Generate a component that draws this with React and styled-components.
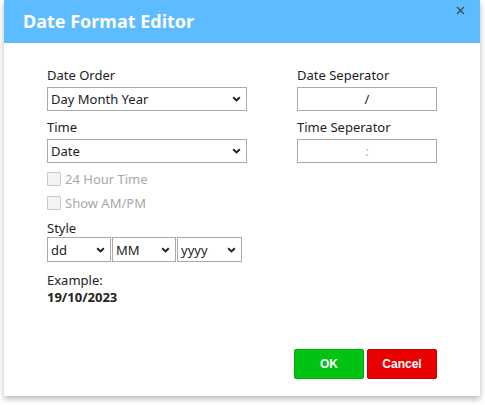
import React from "react";
import styled, { createGlobalStyle } from "styled-components";

const GlobalStyle = createGlobalStyle`
  html, body {
    margin: 0;
    padding: 0;
    background: #ffffff;
  }
  body {
    font-family: "Segoe UI", "Noto Sans", "Liberation Sans", sans-serif;
  }
`;

const Page = styled.div`
  width: 485px;
  height: 405px;
  padding-left: 4px;
  box-sizing: border-box;
`;

const Dialog = styled.div`
  width: 476px;
  height: 396px;
  background: #fff;
  display: flex;
  flex-direction: column;
  box-shadow: 0 3px 6px rgba(0, 0, 0, 0.28);
`;

const Header = styled.div`
  height: 43px;
  background: #5dbcff;
  display: flex;
  align-items: center;
  justify-content: space-between;
  padding: 0 14px 0 19px;
  position: relative;
`;

const Title = styled.h2`
  margin: 0;
  margin-top: -1px;
  font-size: 18px;
  font-weight: 700;
  color: #fff;
`;

const Close = styled.button`
  position: absolute;
  top: 6px;
  right: 15px;
  width: 9px;
  height: 9px;
  padding: 0;
  border: 0;
  background: none;
  display: flex;
`;

const Body = styled.div`
  flex: 1;
  display: flex;
  gap: 50px;
  padding: 24px 0 0 43px;
`;

const Column = styled.div`
  width: ${({ $w }) => $w}px;
  display: flex;
  flex-direction: column;
`;

const Label = styled.div`
  font-size: 13px;
  line-height: 17px;
  color: ${({ $muted }) => ($muted ? "#a8a8a8" : "#222")};
  font-weight: ${({ $bold }) => ($bold ? 700 : 400)};
  margin-bottom: ${({ $mb }) => $mb ?? 3}px;
`;

const SelectBox = styled.div`
  width: ${({ $w }) => ($w ? `${$w}px` : "100%")};
  height: 24px;
  box-sizing: border-box;
  border: 1px solid #a9a9a9;
  display: flex;
  align-items: center;
  justify-content: space-between;
  padding: 0 5px 0 3px;
  font-size: 13px;
  color: #222;
  margin-bottom: ${({ $mb }) => $mb ?? 8}px;
  background: #fff;
`;

const StyleRow = styled.div`
  display: flex;
  gap: 1px;
  margin-bottom: 10px;

  ${SelectBox} {
    height: 25px;
    margin-bottom: 0;
  }
`;

const TextBox = styled.div`
  height: 24px;
  box-sizing: border-box;
  border: 1px solid #a9a9a9;
  display: flex;
  align-items: center;
  justify-content: center;
  font-size: 13px;
  color: ${({ $muted }) => ($muted ? "#b5b5b5" : "#222")};
  margin-bottom: 8px;
`;

const CheckRow = styled.label`
  display: flex;
  align-items: center;
  gap: 4px;
  height: 17px;
  font-size: 13px;
  color: #a8a8a8;
  margin-bottom: ${({ $mb }) => $mb}px;
`;

const Box = styled.span`
  width: 12px;
  height: 12px;
  border: 1px solid #c8c8c8;
  background: #f4f4f4;
  border-radius: 1px;
`;

const Footer = styled.div`
  display: flex;
  justify-content: flex-end;
  gap: 3px;
  padding: 0 43px 17px 0;
`;

const Button = styled.button`
  width: 70px;
  height: 30px;
  border: 1px solid ${({ $bg }) => ($bg === "ok" ? "#08a814" : "#c80000")};
  background: ${({ $bg }) => ($bg === "ok" ? "#00c312" : "#e90000")};
  color: #fff;
  font-family: "Liberation Sans", "Noto Sans", sans-serif;
  font-weight: 700;
  font-size: 12px;
  border-radius: 2px;
  padding: 0;
`;

const Chevron = () => (
  <svg width="9" height="6" viewBox="0 0 9 6">
    <path d="M1.2 1.2 L4.5 4.4 L7.8 1.2" fill="none" stroke="#222" strokeWidth="2" />
  </svg>
);

const Select = ({ value, w, mb }) => (
  <SelectBox $w={w} $mb={mb}>
    <span>{value}</span>
    <Chevron />
  </SelectBox>
);

const App = () => {
  return (
    <>
      <GlobalStyle />
      <Page>
        <Dialog>
          <Header>
            <Title>Date Format Editor</Title>
            <Close aria-label="close">
              <svg width="9" height="9" viewBox="0 0 9 9">
                <path d="M1 1 L8 8 M8 1 L1 8" stroke="#4a4a4a" strokeWidth="1.4" />
              </svg>
            </Close>
          </Header>
          <Body>
            <Column $w={200}>
              <Label>Date Order</Label>
              <Select value="Day Month Year" />
              <Label>Time</Label>
              <Select value="Date" mb={7} />
              <CheckRow $mb={7}>
                <Box />
                24 Hour Time
              </CheckRow>
              <CheckRow $mb={9}>
                <Box />
                Show AM/PM
              </CheckRow>
              <Label $mb={0}>Style</Label>
              <StyleRow>
                <Select value="dd" w={64} />
                <Select value="MM" w={64} />
                <Select value="yyyy" w={65} />
              </StyleRow>
              <Label $mb={0}>Example:</Label>
              <Label $bold>19/10/2023</Label>
            </Column>
            <Column $w={140}>
              <Label>Date Seperator</Label>
              <TextBox>/</TextBox>
              <Label>Time Seperator</Label>
              <TextBox $muted>:</TextBox>
            </Column>
          </Body>
          <Footer>
            <Button $bg="ok">OK</Button>
            <Button $bg="cancel">Cancel</Button>
          </Footer>
        </Dialog>
      </Page>
    </>
  );
};

export default App;
